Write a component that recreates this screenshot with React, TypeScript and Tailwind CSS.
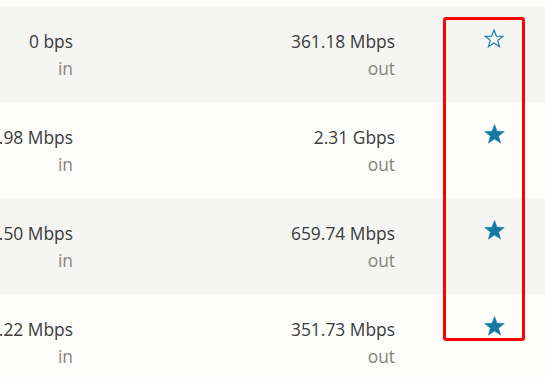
type Row = {
  inValue: string;
  outValue: string;
  starred: boolean;
};

const rows: Row[] = [
  { inValue: "0 bps", outValue: "361.18 Mbps", starred: false },
  { inValue: "184.98 Mbps", outValue: "2.31 Gbps", starred: true },
  { inValue: "212.50 Mbps", outValue: "659.74 Mbps", starred: true },
  { inValue: "97.22 Mbps", outValue: "351.73 Mbps", starred: true },
];

const STAR_POINTS =
  "10,0.6 12.5,7.1 19.5,7.4 14,11.8 15.9,18.6 10,14.7 4.1,18.6 6,11.8 0.5,7.4 7.5,7.1";

function StarIcon({ filled }: { filled: boolean }) {
  if (filled) {
    return (
      <svg width="21" height="20" viewBox="0 0 20 19.5">
        <polygon points={STAR_POINTS} fill="#137aa5" strokeLinejoin="round" stroke="#137aa5" strokeWidth="0.6" />
      </svg>
    );
  }
  return (
    <svg width="20" height="19" viewBox="-0.5 -0.5 21 20.5">
      <polygon points={STAR_POINTS} fill="none" stroke="#1a82ad" strokeWidth="1.3" strokeLinejoin="miter" />
    </svg>
  );
}

export default function App() {
  return (
    <div
      className="relative w-[545px] h-[380px] overflow-hidden bg-[#fdfdfb] pt-[6px]"
      style={{ fontFamily: '"Open Sans", "Liberation Sans", sans-serif' }}
    >
      {rows.map((row, i) => (
        <div
          key={i}
          className={`flex h-[96px] ${i % 2 === 0 ? "bg-[#f5f5f3]" : "bg-[#fdfdfb]"}`}
        >
          <div className="w-[73px] shrink-0 flex flex-col items-end pt-[22px] text-[17.4px] leading-[27px] whitespace-nowrap">
            <span className="text-[#3b3b3b]">{row.inValue}</span>
            <span className="text-[#8a8580]">in</span>
          </div>
          <div className="w-[322px] shrink-0 flex flex-col items-end pt-[22px] text-[17.4px] leading-[27px] whitespace-nowrap">
            <span className="text-[#3b3b3b]">{row.outValue}</span>
            <span className="text-[#85827e]">out</span>
          </div>
          <div className="w-[198px] shrink-0 flex justify-center pt-[22px]">
            <div className="w-[21px] h-[20px] flex items-center justify-center">
              <StarIcon filled={row.starred} />
            </div>
          </div>
        </div>
      ))}

      {/* highlight box */}
      <div className="absolute left-[443px] top-[17px] w-[82px] h-[324px] border-[3px] border-[#ff0000] rounded-[3px]" />
    </div>
  );
}
